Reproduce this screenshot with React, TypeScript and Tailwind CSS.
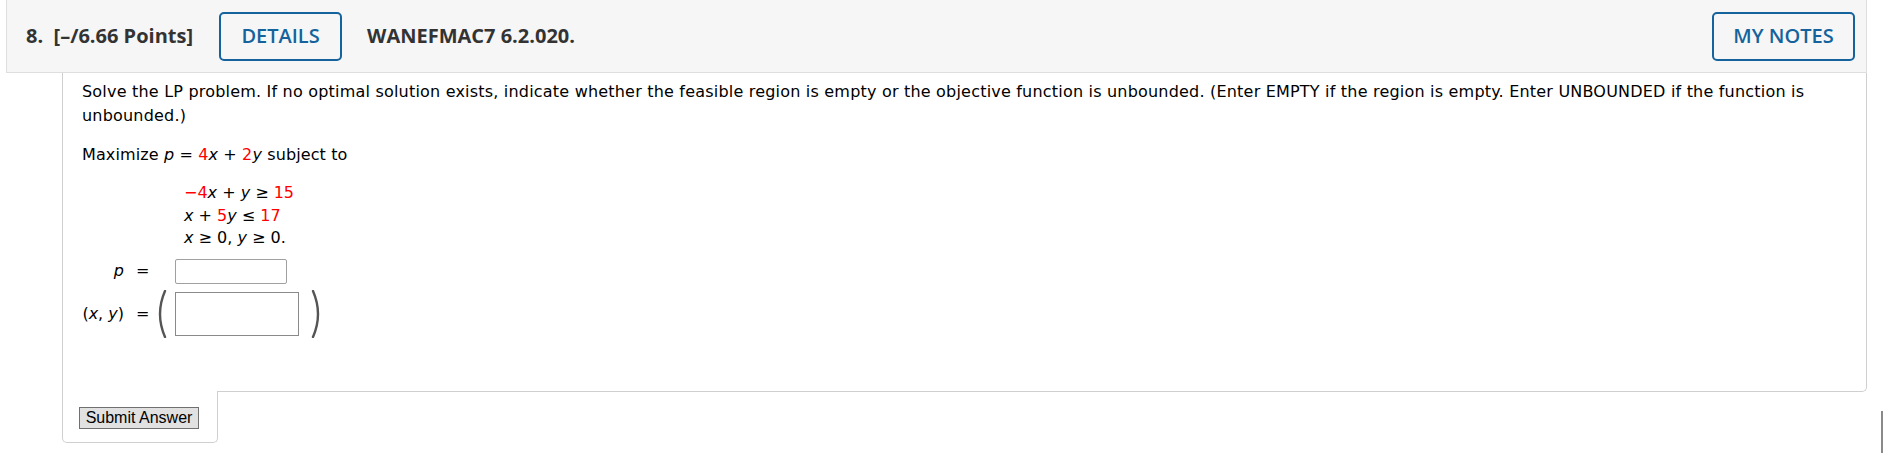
import React from 'react'

const red = 'text-[#ff0000]'

function Paren({ flip = false }: { flip?: boolean }) {
  return (
    <svg width="14" height="48" viewBox="0 0 14 48" className={flip ? 'scale-x-[-1]' : ''}>
      <path d="M11 1 Q1 24 11 47" fill="none" stroke="#555" strokeWidth="2.4" strokeLinecap="round" />
    </svg>
  )
}

export default function App() {
  return (
    <div className="relative w-[1887px] h-[453px] bg-white overflow-hidden font-['DejaVu_Sans',sans-serif] text-black">
      <div className="pl-[6px] pr-[20px]">
        {/* Question header */}
        <div className="h-[73px] bg-[#f6f6f6] border-x border-b border-[#dedede] flex items-center pl-[19px] pr-[11px] font-['Open_Sans',sans-serif] text-[#333]">
          <span className="text-[20px] font-bold whitespace-pre">8.  [–/6.66 Points]</span>
          <button className="ml-[26px] w-[123px] h-[49px] border-2 border-[#14639c] rounded-[5px] text-[#14639c] text-[20px] font-semibold">
            DETAILS
          </button>
          <span className="ml-[25px] text-[20px] font-bold">WANEFMAC7 6.2.020.</span>
          <div className="flex-1" />
          <button className="w-[143px] h-[49px] border-2 border-[#14639c] rounded-[5px] text-[#14639c] text-[20px] font-semibold">
            MY NOTES
          </button>
        </div>

        {/* Question body */}
        <div className="ml-[56px] border-x border-b border-[#cfcfcf] rounded-br-[5px] pl-[19px] pr-[40px] pt-[7px] pb-[53px] text-[16px]">
          <p className="leading-[24px] tracking-[0.2px]">
            Solve the LP problem. If no optimal solution exists, indicate whether the feasible region is empty or the objective function is unbounded. (Enter EMPTY if the region is empty. Enter UNBOUNDED if the function is unbounded.)
          </p>
          <p className="mt-[15px] leading-[24px] tracking-[0.12px]">
            Maximize <i>p</i> = <span className={red}>4</span><i>x</i> + <span className={red}>2</span><i>y</i> subject to
          </p>
          <div className="mt-[15px] ml-[102px] leading-[22.5px]">
            <div><span className={red}>−4</span><i>x</i> + <i>y</i> ≥ <span className={red}>15</span></div>
            <div><i>x</i> + <span className={red}>5</span><i>y</i> ≤ <span className={red}>17</span></div>
            <div><i>x</i> ≥ 0, <i>y</i> ≥ 0.</div>
          </div>

          <div className="mt-[9px] grid grid-cols-[42px_28px_auto] items-center gap-y-[6px] w-max">
            <div className="text-right"><i>p</i></div>
            <div className="pl-[12px]">=</div>
            <div className="pl-[23px]">
              <div className="w-[112px] h-[25px] border border-[#a0a0a0] rounded-[2px] bg-white" />
            </div>

            <div className="text-right">(<i>x</i>, <i>y</i>)</div>
            <div className="pl-[12px]">=</div>
            <div className="flex items-center">
              <div className="ml-[2px]"><Paren /></div>
              <div className="ml-[7px] w-[124px] h-[44px] border border-[#8a8a8a] bg-white" />
              <div className="ml-[11px]"><Paren flip /></div>
            </div>
          </div>
        </div>

        {/* Submit tab */}
        <div className="relative -mt-px ml-[56px] w-[156px] bg-white border-x border-b border-[#cfcfcf] rounded-b-[5px] pl-[16px] pt-[15px] pb-[12px]">
          <button className="h-[22px] w-[120px] bg-[#e1e1e1] border border-[#707070] font-['Liberation_Sans',sans-serif] text-[16px] leading-[18px] text-black">
            Submit Answer
          </button>
        </div>
      </div>

      <div className="absolute left-[1881px] top-[411px] w-[2px] h-[42px] bg-[#8a8a8a]" />
    </div>
  )
}
